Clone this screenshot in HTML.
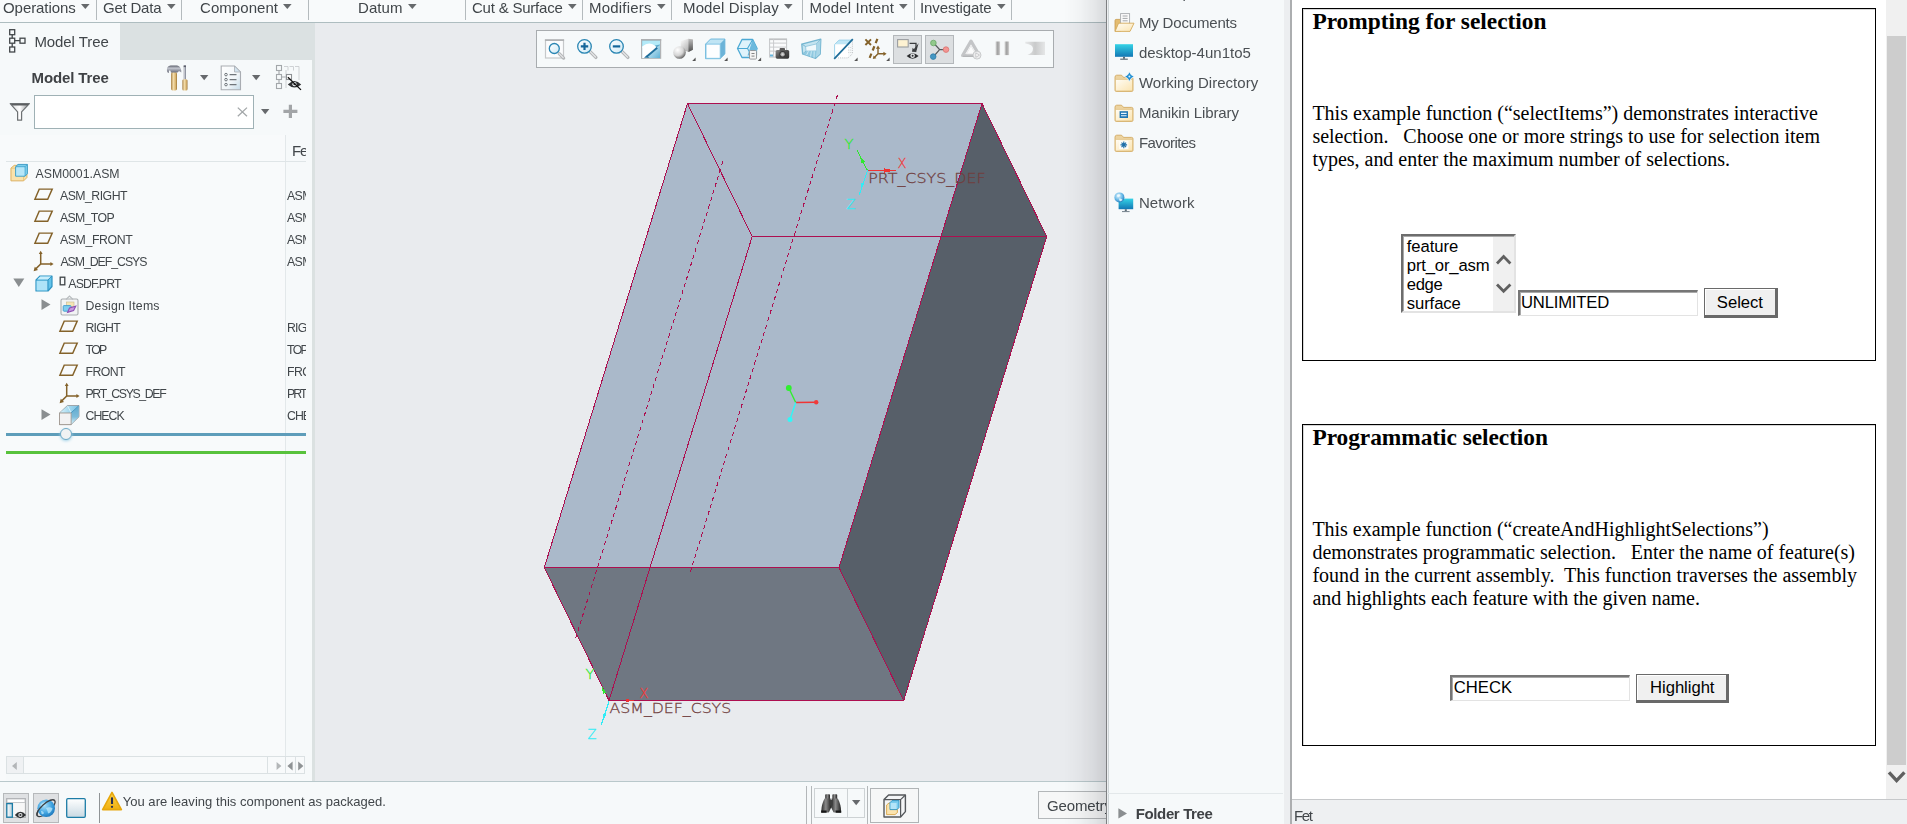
<!DOCTYPE html>
<html>
<head>
<meta charset="utf-8">
<title>Creo Parametric</title>
<style>
html,body{margin:0;padding:0;}
body{width:1907px;height:824px;overflow:hidden;position:relative;background:#e9ebee;font-family:"Liberation Sans",sans-serif;font-size:15px;color:#41464a;}
.abs{position:absolute;}
#menubar,#tab,#leftpanel,.tree,#statusbar,#navpanel,#bstatus{will-change:transform;}
svg{overflow:visible;}
#menubar{left:0;top:0;width:1107px;height:22px;background:#f8fafb;border-bottom:1px solid #aebdc0;}
#menubar .sep{position:absolute;top:0;width:1px;height:20px;background:#b4babd;}
#tabstrip{left:0;top:23px;width:315px;height:37px;background:#dbe1e2;}
#edge{left:312px;top:60px;width:3px;height:721px;background:#dbe1e1;}
#tab{left:0;top:23px;width:120px;height:37px;background:#f6f9fa;}
#leftpanel{left:0;top:60px;width:312px;height:721px;background:#f6f9fa;}
#statusbar{left:0;top:781px;width:1107px;height:43px;background:#f6f9fa;box-shadow:inset 0 1px 0 #b9c8cb;}
#gfx{left:315px;top:23px;width:792px;height:758px;background:#e9ebee;overflow:hidden;}
#navpanel{left:1106px;top:0;width:177px;height:824px;background:#f6f9fa;border-left:1px solid #7e8082;overflow:hidden;}
#splitter{left:1284px;top:0;width:6px;height:824px;background:#eceef0;border-right:2px solid #acaeb0;}
#browser{left:1292px;top:0;width:615px;height:799px;background:#ffffff;overflow:hidden;}
#bstatus{left:1292px;top:799px;width:615px;height:25px;background:#eef0f2;border-top:1px solid #c6c8ca;}
.tree{position:absolute;left:6px;top:135px;width:300px;height:621px;background:#f8fafb;overflow:hidden;}
.tree .col2{position:absolute;left:279px;top:0;width:21px;height:623px;background:#f6f9fa;border-left:1px solid #e3e8ea;}
.row{position:absolute;left:0;width:279px;height:22px;}
.row svg{position:absolute;}
.c2{position:absolute;left:281px;width:19px;overflow:hidden;height:22px;}
#browser .box{position:absolute;left:10px;width:574px;box-sizing:border-box;border:1px solid #000;box-shadow:inset 1px 1px 0 rgba(0,0,0,0.16);}
#browser .h{position:absolute;left:20.4px;font-family:"Liberation Serif",serif;font-weight:bold;font-size:23.4px;line-height:28px;color:#000;white-space:nowrap;}
#browser .p{position:absolute;left:20.4px;font-family:"Liberation Serif",serif;font-size:20px;line-height:23px;color:#000;white-space:nowrap;}
#browser .inp{position:absolute;box-sizing:border-box;background:#fff;border-style:solid;border-width:2px 1px 1px 2px;border-color:#767676 #e3e3e3 #e3e3e3 #767676;box-shadow:inset 1px 1px 0 #a9a9a9;}
#browser .btn{position:absolute;box-sizing:border-box;background:#f0f0f0;border-style:solid;border-width:1px 3px 3px 1px;border-color:#6a6a6a #696969 #696969 #6a6a6a;box-shadow:inset 1px 1px 0 #ffffff;}
#browser .ft{position:absolute;font-size:16.67px;line-height:19px;color:#000;white-space:nowrap;}
</style>
</head>
<body>

<!-- p_menu -->
<div id="menubar" class="abs"><span style="letter-spacing:-0.064px;position:absolute;left:3px;top:-2.0px;line-height:20px;font-size:15px;color:#41464a;white-space:nowrap;">Operations</span><svg class="abs" width="8.6" height="5" viewBox="0 0 8.6 5" style="left:80.8px;top:3.8px"><path d="M0 0 H8.6 L4.3 5 Z" fill="#66696c"/></svg><span style="letter-spacing:-0.219px;position:absolute;left:103px;top:-2.0px;line-height:20px;font-size:15px;color:#41464a;white-space:nowrap;">Get Data</span><svg class="abs" width="8.6" height="5" viewBox="0 0 8.6 5" style="left:166.8px;top:3.8px"><path d="M0 0 H8.6 L4.3 5 Z" fill="#66696c"/></svg><span style="letter-spacing:0.055px;position:absolute;left:200px;top:-2.0px;line-height:20px;font-size:15px;color:#41464a;white-space:nowrap;">Component</span><svg class="abs" width="8.6" height="5" viewBox="0 0 8.6 5" style="left:282.8px;top:3.8px"><path d="M0 0 H8.6 L4.3 5 Z" fill="#66696c"/></svg><span style="letter-spacing:0.078px;position:absolute;left:358px;top:-2.0px;line-height:20px;font-size:15px;color:#41464a;white-space:nowrap;">Datum</span><svg class="abs" width="8.6" height="5" viewBox="0 0 8.6 5" style="left:407.8px;top:3.8px"><path d="M0 0 H8.6 L4.3 5 Z" fill="#66696c"/></svg><span style="letter-spacing:-0.216px;position:absolute;left:472px;top:-2.0px;line-height:20px;font-size:15px;color:#41464a;white-space:nowrap;">Cut &amp; Surface</span><svg class="abs" width="8.6" height="5" viewBox="0 0 8.6 5" style="left:567.8px;top:3.8px"><path d="M0 0 H8.6 L4.3 5 Z" fill="#66696c"/></svg><span style="letter-spacing:0.193px;position:absolute;left:589px;top:-2.0px;line-height:20px;font-size:15px;color:#41464a;white-space:nowrap;">Modifiers</span><svg class="abs" width="8.6" height="5" viewBox="0 0 8.6 5" style="left:656.8px;top:3.8px"><path d="M0 0 H8.6 L4.3 5 Z" fill="#66696c"/></svg><span style="letter-spacing:0.132px;position:absolute;left:683px;top:-2.0px;line-height:20px;font-size:15px;color:#41464a;white-space:nowrap;">Model Display</span><svg class="abs" width="8.6" height="5" viewBox="0 0 8.6 5" style="left:783.8px;top:3.8px"><path d="M0 0 H8.6 L4.3 5 Z" fill="#66696c"/></svg><span style="letter-spacing:0.167px;position:absolute;left:809.6px;top:-2.0px;line-height:20px;font-size:15px;color:#41464a;white-space:nowrap;">Model Intent</span><svg class="abs" width="8.6" height="5" viewBox="0 0 8.6 5" style="left:898.8px;top:3.8px"><path d="M0 0 H8.6 L4.3 5 Z" fill="#66696c"/></svg><span style="letter-spacing:-0.085px;position:absolute;left:920px;top:-2.0px;line-height:20px;font-size:15px;color:#41464a;white-space:nowrap;">Investigate</span><svg class="abs" width="8.6" height="5" viewBox="0 0 8.6 5" style="left:996.8px;top:3.8px"><path d="M0 0 H8.6 L4.3 5 Z" fill="#66696c"/></svg><i class="sep" style="left:96px"></i><i class="sep" style="left:181px"></i><i class="sep" style="left:308px"></i><i class="sep" style="left:465px"></i><i class="sep" style="left:582px"></i><i class="sep" style="left:671px"></i><i class="sep" style="left:802px"></i><i class="sep" style="left:914px"></i><i class="sep" style="left:1011px"></i></div>
<!-- p_left -->
<div id="tabstrip" class="abs"></div><div id="edge" class="abs"></div><div id="tab" class="abs"><svg class="abs" width="20" height="26" viewBox="0 0 20 26" style="left:8px;top:5px"><g fill="none" stroke="#42474a" stroke-width="1.3"><rect x="1.7" y="1.7" width="5" height="5"/><rect x="1.7" y="10.2" width="5" height="5"/><rect x="1.7" y="19" width="5" height="5"/><rect x="12" y="10.2" width="5" height="5"/><path d="M4.2 6.7 V10.2 M4.2 15.2 V19 M6.7 12.7 H12"/></g></svg><span style="letter-spacing:-0.072px;position:absolute;left:34.4px;top:9.0px;line-height:20px;font-size:15px;color:#41464a;white-space:nowrap;">Model Tree</span></div><div id="leftpanel" class="abs"><span style="letter-spacing:-0.129px;position:absolute;left:31.6px;top:8.0px;line-height:20px;font-size:15px;color:#3f4245;white-space:nowrap;font-weight:bold;">Model Tree</span>
<svg class="abs" width="24" height="28" viewBox="0 0 24 28" style="left:166px;top:3.5px">
<defs><linearGradient id="wd" x1="0" x2="1"><stop offset="0" stop-color="#a9844a"/><stop offset="0.4" stop-color="#f3dcaa"/><stop offset="0.75" stop-color="#d9b673"/><stop offset="1" stop-color="#9c7436"/></linearGradient>
<linearGradient id="st" x1="0" x2="0" y1="0" y2="1"><stop offset="0" stop-color="#5d606c"/><stop offset="0.35" stop-color="#c3c6cf"/><stop offset="1" stop-color="#5f6270"/></linearGradient></defs>
<rect x="5" y="8" width="6" height="18.4" rx="1.7" fill="url(#wd)"/>
<path d="M0.9 6.4 Q0.6 2 4.6 1.6 H11 Q14.6 1.9 15.3 6.8 L15.2 8.6 Q13.4 6 11.4 8.6 H5 Q4.6 6.2 3.6 6.2 Q2.6 6.6 2.8 9 Q1 8.8 0.9 6.4 Z" fill="url(#st)"/>
<rect x="17.7" y="1.5" width="2.3" height="14" fill="#8a8e9b"/><rect x="18.3" y="2.4" width="0.8" height="13" fill="#d9dbe2"/><rect x="17.7" y="1.5" width="2.3" height="1.6" fill="#5d606c"/>
<rect x="16.3" y="15.2" width="5.2" height="11.2" rx="1.5" fill="url(#wd)"/></svg><svg class="abs" width="8.4" height="5.2" viewBox="0 0 8.4 5.2" style="left:200px;top:15px"><path d="M0 0 H8.4 L4.2 5.2 Z" fill="#66696c"/></svg><svg class="abs" width="22" height="26" viewBox="0 0 22 26" style="left:219.5px;top:4.5px">
<defs><linearGradient id="dg" x1="0" x2="1" y1="0" y2="1"><stop offset="0" stop-color="#ffffff"/><stop offset="0.6" stop-color="#f1f6f9"/><stop offset="1" stop-color="#c5dbe8"/></linearGradient></defs>
<path d="M1.2 1 H14.5 L20.5 7 V24.8 H1.2 Z" fill="url(#dg)" stroke="#a9adb2" stroke-width="1.1"/><path d="M14.5 1 V7 H20.5 Z" fill="#d3e3ee" stroke="#a9adb2" stroke-width="0.8"/>
<g fill="none" stroke="#70767b" stroke-width="1"><circle cx="6" cy="9.6" r="1.3"/><circle cx="6" cy="14.6" r="1.3"/><circle cx="6" cy="19.6" r="1.3"/><path d="M9.6 9.6 H16.5 M9.6 14.6 H16.5 M9.6 19.6 H16.5" stroke-width="1.2"/></g></svg><svg class="abs" width="8.4" height="5.2" viewBox="0 0 8.4 5.2" style="left:252px;top:15px"><path d="M0 0 H8.4 L4.2 5.2 Z" fill="#66696c"/></svg><svg class="abs" width="28" height="27" viewBox="0 0 28 27" style="left:275px;top:4px">
<g fill="none" stroke="#a3a7aa" stroke-width="1.1"><rect x="1.5" y="1.5" width="5" height="5"/><rect x="1.5" y="10.5" width="5" height="5"/><rect x="1.5" y="19.5" width="5" height="5"/><path d="M4 6.5 V10.5 M4 15.5 V19.5 M6.5 13 H11.5"/></g>
<g fill="none" stroke="#c9cccf" stroke-width="0.9"><path d="M9 2.5 H13 V6.5 M14.5 2.5 H18.5 V6.5 M20 2.5 H24 V16 M11 6 V24"/></g>
<rect x="11.5" y="10.5" width="5" height="5" fill="#fff" stroke="#8d9194" stroke-width="1.1"/>
<path d="M12.8 20.4 Q19.5 13.4 26.2 20.4 Q19.5 26.6 12.8 20.4 Z" fill="#303234"/><circle cx="19.5" cy="20.2" r="2.1" fill="#f4f8fa"/><circle cx="19.5" cy="20.2" r="1.15" fill="#303234"/>
<path d="M12.9 13.2 L26 25.9" stroke="#111" stroke-width="1.3"/></svg>
<svg class="abs" width="22" height="20" viewBox="0 0 22 20" style="left:9px;top:42px">
<defs><linearGradient id="fg" x1="0" x2="1"><stop offset="0" stop-color="#d8dadb"/><stop offset="0.5" stop-color="#ffffff"/><stop offset="1" stop-color="#8d9092"/></linearGradient></defs>
<path d="M1.2 1.6 H20.4 L12.6 9.8 V18.2 H8.6 V9.8 Z" fill="url(#fg)" stroke="#6d7173" stroke-width="1.2" stroke-linejoin="round"/><path d="M2 2 H19.6 L18.4 3.4 H3.4 Z" fill="#5b5e60"/></svg>
<div class="abs" style="left:34px;top:35px;width:218px;height:32px;background:#fff;border:1px solid #9fb1b5"></div>
<svg class="abs" width="11" height="10" viewBox="0 0 11 10" style="left:236.5px;top:46.5px"><path d="M0.8 0.6 L10 9.2 M10 0.6 L0.8 9.2" stroke="#a3a7a9" stroke-width="1.3" fill="none"/></svg>
<svg class="abs" width="8.4" height="5.2" viewBox="0 0 8.4 5.2" style="left:261px;top:49px"><path d="M0 0 H8.4 L4.2 5.2 Z" fill="#66696c"/></svg>
<svg class="abs" width="15" height="15" viewBox="0 0 15 15" style="left:283px;top:44px"><path d="M7.4 0.8 V14 M0.4 7.4 H14.4" stroke="#a2a5a7" stroke-width="3.2" fill="none"/></svg>
</div>
<div class="abs" style="left:0;top:135px;width:6px;height:646px;background:#f8fafb"></div><div class="tree">
<div class="col2"></div><div class="abs" style="left:0;top:2px;width:300px;height:619px">
<div class="abs" style="left:0;top:24px;width:300px;height:1px;background:#dfe5e7"></div>
<div class="c2" style="top:2px;left:286px;width:14px"><span style="letter-spacing:-1.116px;position:absolute;left:0px;top:2.0px;line-height:20px;font-size:15px;color:#41464a;white-space:nowrap;">Fe</span></div>
<div class="row" style="top:25px"><svg width="18.8" height="18.8" viewBox="0 0 20 20" style="left:4px;top:1.4px"><path d="M1 5.5 L4.5 2.5 H18 V15.5 L14.5 19 H1 Z" fill="#f9e2ac" stroke="#dcae5a" stroke-width="1"/><path d="M1 5.5 H14.5 V19 M14.5 5.5 L18 2.5" fill="none" stroke="#e6bd6e" stroke-width="0.8"/><path d="M6 4 L8.5 1.5 H18.5 V11.5 L16 14 H6 Z" fill="#7fd0ee" stroke="#3b9cc6" stroke-width="1"/><path d="M6 4 H16 V14 M16 4 L18.5 1.5" fill="none" stroke="#3b9cc6" stroke-width="0.8"/><path d="M6.6 4.6 H15.4 V13.4 H6.6 Z" fill="#b6e6f8"/></svg><span style="letter-spacing:0.002px;position:absolute;left:29.5px;top:2.0px;line-height:20px;font-size:12.3px;color:#41464a;white-space:nowrap;">ASM0001.ASM</span></div><div class="row" style="top:47px"><svg width="20" height="13" viewBox="0 0 20 13" style="left:27.5px;top:3.9px"><path d="M5.2 1.1 H18.2 L13.7 11.3 H0.9 Z" fill="none" stroke="#84622a" stroke-width="1.45" stroke-linejoin="miter"/></svg><span style="letter-spacing:-0.531px;position:absolute;left:54px;top:2.0px;line-height:20px;font-size:12.3px;color:#41464a;white-space:nowrap;">ASM_RIGHT</span></div><div class="row" style="top:69px"><svg width="20" height="13" viewBox="0 0 20 13" style="left:27.5px;top:3.9px"><path d="M5.2 1.1 H18.2 L13.7 11.3 H0.9 Z" fill="none" stroke="#84622a" stroke-width="1.45" stroke-linejoin="miter"/></svg><span style="letter-spacing:-0.658px;position:absolute;left:54px;top:2.0px;line-height:20px;font-size:12.3px;color:#41464a;white-space:nowrap;">ASM_TOP</span></div><div class="row" style="top:91px"><svg width="20" height="13" viewBox="0 0 20 13" style="left:27.5px;top:3.9px"><path d="M5.2 1.1 H18.2 L13.7 11.3 H0.9 Z" fill="none" stroke="#84622a" stroke-width="1.45" stroke-linejoin="miter"/></svg><span style="letter-spacing:-0.393px;position:absolute;left:54px;top:2.0px;line-height:20px;font-size:12.3px;color:#41464a;white-space:nowrap;">ASM_FRONT</span></div><div class="row" style="top:113px"><svg width="22" height="22" viewBox="0 0 22 22" style="left:27px;top:0px"><g stroke="#84622a" stroke-width="1.5" fill="#84622a"><path d="M7.7 3 V14 H19" fill="none"/><path d="M7.7 14 L2 19.6" fill="none"/><path d="M7.7 0.8 L9.6 4 H5.8 Z M20.6 14 L17.4 15.9 V12.1 Z M0.6 21.2 L1.8 16.8 L5 20 Z" stroke="none"/></g></svg><span style="letter-spacing:-1.028px;position:absolute;left:54.4px;top:2.0px;line-height:20px;font-size:12.3px;color:#41464a;white-space:nowrap;">ASM_DEF_CSYS</span></div><div class="row" style="top:135px"><svg width="12" height="10" viewBox="0 0 12 10" style="left:7px;top:6px"><path d="M0.3 0.5 H11.3 L5.8 9 Z" fill="#8a8e90"/></svg><svg width="18" height="17" viewBox="0 0 18 17" style="left:28.5px;top:2.5px"><path d="M1 5 L5 1 H17 V11.5 L13 16 H1 Z" fill="#63c3ea" stroke="#2f93c2" stroke-width="1.2" stroke-linejoin="round"/><path d="M1.6 5.4 H12.6 V15.4 H1.6 Z" fill="#aee3f8"/><path d="M1 5 H13 V16 M13 5 L17 1" fill="none" stroke="#2f93c2" stroke-width="1"/><path d="M5.2 1.6 H16 L12.8 4.6 H2.2 Z" fill="#c9eefb"/></svg><svg width="8" height="11" viewBox="0 0 8 11" style="left:53px;top:4px"><rect x="1.2" y="1.2" width="4.6" height="7.6" fill="none" stroke="#3f4447" stroke-width="1.3"/></svg><span style="letter-spacing:-0.862px;position:absolute;left:62.3px;top:2.0px;line-height:20px;font-size:12.3px;color:#41464a;white-space:nowrap;">ASDF.PRT</span></div><div class="row" style="top:157px"><svg width="10" height="12" viewBox="0 0 10 12" style="left:34.5px;top:5px"><path d="M0.5 0.3 V10.9 L9.5 5.6 Z" fill="#8a8e90"/></svg><svg width="19" height="21" viewBox="0 0 19 21" style="left:54px;top:0.5px"><rect x="1" y="4" width="17" height="16" rx="1.5" fill="#f2f3f4" stroke="#a9adb0" stroke-width="1.1"/><path d="M6 4.5 L9.5 1 L13 4.5" fill="none" stroke="#b9bdc0" stroke-width="1.2"/><rect x="6.5" y="7" width="7.5" height="4.5" fill="#f6e5b4" stroke="#c6b98e" stroke-width="0.6"/><rect x="3.2" y="10.6" width="7.8" height="5.6" rx="0.8" fill="#7fcdf0" stroke="#3f9ccb" stroke-width="0.9"/><path d="M9.5 13 L15.8 11.2 L13.6 15.6 L7.6 17.4 Z" fill="#c79be0" stroke="#8d4fb4" stroke-width="1.1"/></svg><span style="letter-spacing:0.203px;position:absolute;left:79.5px;top:2.0px;line-height:20px;font-size:12.3px;color:#41464a;white-space:nowrap;">Design Items</span></div><div class="row" style="top:179px"><svg width="20" height="13" viewBox="0 0 20 13" style="left:53px;top:3.9px"><path d="M5.2 1.1 H18.2 L13.7 11.3 H0.9 Z" fill="none" stroke="#84622a" stroke-width="1.45" stroke-linejoin="miter"/></svg><span style="letter-spacing:-0.766px;position:absolute;left:79.5px;top:2.0px;line-height:20px;font-size:12.3px;color:#41464a;white-space:nowrap;">RIGHT</span></div><div class="row" style="top:201px"><svg width="20" height="13" viewBox="0 0 20 13" style="left:53px;top:3.9px"><path d="M5.2 1.1 H18.2 L13.7 11.3 H0.9 Z" fill="none" stroke="#84622a" stroke-width="1.45" stroke-linejoin="miter"/></svg><span style="letter-spacing:-1.631px;position:absolute;left:79.5px;top:2.0px;line-height:20px;font-size:12.3px;color:#41464a;white-space:nowrap;">TOP</span></div><div class="row" style="top:223px"><svg width="20" height="13" viewBox="0 0 20 13" style="left:53px;top:3.9px"><path d="M5.2 1.1 H18.2 L13.7 11.3 H0.9 Z" fill="none" stroke="#84622a" stroke-width="1.45" stroke-linejoin="miter"/></svg><span style="letter-spacing:-0.590px;position:absolute;left:79.5px;top:2.0px;line-height:20px;font-size:12.3px;color:#41464a;white-space:nowrap;">FRONT</span></div><div class="row" style="top:245px"><svg width="22" height="22" viewBox="0 0 22 22" style="left:52.5px;top:0px"><g stroke="#84622a" stroke-width="1.5" fill="#84622a"><path d="M7.7 3 V14 H19" fill="none"/><path d="M7.7 14 L2 19.6" fill="none"/><path d="M7.7 0.8 L9.6 4 H5.8 Z M20.6 14 L17.4 15.9 V12.1 Z M0.6 21.2 L1.8 16.8 L5 20 Z" stroke="none"/></g></svg><span style="letter-spacing:-1.358px;position:absolute;left:79.5px;top:2.0px;line-height:20px;font-size:12.3px;color:#41464a;white-space:nowrap;">PRT_CSYS_DEF</span></div><div class="row" style="top:267px"><svg width="10" height="12" viewBox="0 0 10 12" style="left:34.5px;top:5px"><path d="M0.5 0.3 V10.9 L9.5 5.6 Z" fill="#8a8e90"/></svg><svg width="21" height="21" viewBox="0 0 21 21" style="left:52.6px;top:1.2px"><defs><linearGradient id="ftp" x1="0" x2="1"><stop offset="0" stop-color="#d6f1fb"/><stop offset="0.55" stop-color="#9fd6ee"/><stop offset="1" stop-color="#7cc0e0"/></linearGradient><linearGradient id="frt" x1="0" x2="0" y1="0" y2="1"><stop offset="0" stop-color="#5fa9cd"/><stop offset="0.6" stop-color="#7dbcda"/><stop offset="1" stop-color="#dff4fb"/></linearGradient></defs><path d="M0.5 8 L8.4 0.5 H20 V11.8 L12 19.6 H0.5 Z" fill="#8ecbe6" stroke="#9a9ea2" stroke-width="0.9" stroke-linejoin="round"/><path d="M0.9 7.8 L8.5 0.9 H19.4 L12 7.8 Z" fill="url(#ftp)"/><path d="M12.2 8 L19.6 1.2 V11.6 L12.2 19 Z" fill="url(#frt)"/><path d="M8.6 1 L12 7.6" stroke="#e6f7fd" stroke-width="0.8"/><path d="M12 8 L19.8 0.7" stroke="#3f93bd" stroke-width="0.9"/><rect x="0.5" y="8" width="11.6" height="11.6" fill="#f2f2f3" stroke="#a39a92" stroke-width="0.9"/></svg><span style="letter-spacing:-0.987px;position:absolute;left:79.5px;top:2.0px;line-height:20px;font-size:12.3px;color:#41464a;white-space:nowrap;">CHECK</span></div><div class="c2" style="top:47px"><span style="letter-spacing:-0.628px;position:absolute;left:0px;top:2.0px;line-height:20px;font-size:12.3px;color:#41464a;white-space:nowrap;">ASM</span></div><div class="c2" style="top:69px"><span style="letter-spacing:-0.628px;position:absolute;left:0px;top:2.0px;line-height:20px;font-size:12.3px;color:#41464a;white-space:nowrap;">ASM</span></div><div class="c2" style="top:91px"><span style="letter-spacing:-0.628px;position:absolute;left:0px;top:2.0px;line-height:20px;font-size:12.3px;color:#41464a;white-space:nowrap;">ASM</span></div><div class="c2" style="top:113px"><span style="letter-spacing:-0.628px;position:absolute;left:0px;top:2.0px;line-height:20px;font-size:12.3px;color:#41464a;white-space:nowrap;">ASM</span></div><div class="c2" style="top:179px"><span style="letter-spacing:-0.766px;position:absolute;left:0px;top:2.0px;line-height:20px;font-size:12.3px;color:#41464a;white-space:nowrap;">RIGHT</span></div><div class="c2" style="top:201px"><span style="letter-spacing:-1.631px;position:absolute;left:0px;top:2.0px;line-height:20px;font-size:12.3px;color:#41464a;white-space:nowrap;">TOP</span></div><div class="c2" style="top:223px"><span style="letter-spacing:-0.590px;position:absolute;left:0px;top:2.0px;line-height:20px;font-size:12.3px;color:#41464a;white-space:nowrap;">FRONT</span></div><div class="c2" style="top:245px"><span style="letter-spacing:-1.938px;position:absolute;left:0px;top:2.0px;line-height:20px;font-size:12.3px;color:#41464a;white-space:nowrap;">PRT</span></div><div class="c2" style="top:267px"><span style="letter-spacing:-0.987px;position:absolute;left:0px;top:2.0px;line-height:20px;font-size:12.3px;color:#41464a;white-space:nowrap;">CHECK</span></div>
<div class="abs" style="left:0;top:296px;width:300px;height:3px;background:#5e9dba"></div>
<div class="abs" style="left:53.5px;top:291px;width:10px;height:10px;border-radius:7px;background:#f1f2f3;border:1.5px solid #6ea9c6;box-shadow:0 1px 3px #9fd0e6"></div>
<div class="abs" style="left:0;top:314px;width:300px;height:3px;background:#58c23c"></div>
</div></div>
<!-- p_gfx -->
<div id="gfx" class="abs"><svg class="abs" style="left:0;top:0" width="792" height="758" viewBox="0 0 792 758"><g shape-rendering="crispEdges"><polygon points="372.5,80.5 667.0,80.5 524.0,544.5 229.3,544.5" fill="#aab9ca"/><polygon points="667.0,80.5 731.7,213.5 588.7,677.5 524.0,544.5" fill="#575f69"/><polygon points="229.3,544.5 524.0,544.5 588.7,677.5 294.0,677.5" fill="#6f7782"/><g stroke="#ad0f50" stroke-width="1" fill="none"><line x1="372.5" y1="80.5" x2="667.0" y2="80.5" /><line x1="667.0" y1="80.5" x2="731.7" y2="213.5" /><line x1="731.7" y1="213.5" x2="437.2" y2="213.5" /><line x1="437.2" y1="213.5" x2="372.5" y2="80.5" /><line x1="372.5" y1="80.5" x2="229.3" y2="544.5" /><line x1="437.2" y1="213.5" x2="294.0" y2="677.5" /><line x1="229.3" y1="544.5" x2="294.0" y2="677.5" /><line x1="229.3" y1="544.5" x2="524.0" y2="544.5" /><line x1="524.0" y1="544.5" x2="588.7" y2="677.5" /><line x1="294.0" y1="677.5" x2="588.7" y2="677.5" /><line x1="731.7" y1="213.5" x2="588.7" y2="677.5" /><line x1="667.0" y1="80.5" x2="524.0" y2="544.5" /><line x1="522.4" y1="72.3" x2="374.2" y2="552.7" stroke-dasharray="4.2 3.3"/><line x1="407.8" y1="138.5" x2="259.6" y2="618.7" stroke-dasharray="4.2 3.3"/></g><g stroke-width="1" fill="none"><line x1="552.5" y1="147.5" x2="542.0" y2="127.2" stroke="#2fe82f"/><line x1="552.5" y1="147.5" x2="581.0" y2="147.5" stroke="#f03232"/><line x1="552.5" y1="147.5" x2="544.3" y2="171.7" stroke="#30ecf6"/></g><polygon points="544.2,131.5 549.6,138.6 546.6,140.2" fill="#2fe82f"/><polygon points="580.0,147.5 569.0,145.3 569.0,149.7" fill="#f03232"/><polygon points="545.6,167.5 546.6,159.6 549.6,160.6" fill="#30ecf6"/><g stroke-width="1" fill="none"><line x1="294.0" y1="678.5" x2="286.3" y2="701.7" stroke="#30ecf6"/></g><polygon points="286.5,662.5 291.0,669.5 288.0,671.0" fill="#2fe82f"/><polygon points="319.0,677.5 311.0,676.0 311.0,679.2" fill="#f03232"/><polygon points="287.5,698.5 288.3,690.5 291.3,691.5" fill="#30ecf6"/></g><g stroke-width="1.4" fill="none"><line x1="480.7" y1="379.5" x2="473.8" y2="365.0" stroke="#2ff02f"/><line x1="480.7" y1="379.5" x2="501.2" y2="379.3" stroke="#f03434"/><line x1="480.7" y1="379.5" x2="475.0" y2="396.5" stroke="#30f6f6"/></g><circle cx="473.79999999999995" cy="365" r="2.9" fill="#2ff02f"/><circle cx="501.20000000000005" cy="379.2" r="2.2" fill="#f03a3a"/><circle cx="475" cy="396.6" r="2.5" fill="#30f8f8"/><text x="529.6" y="125.8" font-family="DejaVu Sans Light, DejaVu Sans, Liberation Sans, sans-serif" font-weight="200" font-size="14.6" fill="#2fe82f" stroke="#2fe82f" stroke-width="0.3" textLength="9" lengthAdjust="spacingAndGlyphs">Y</text><text x="582.6" y="145.2" font-family="DejaVu Sans Light, DejaVu Sans, Liberation Sans, sans-serif" font-weight="200" font-size="14.6" fill="#f03a3a" stroke="#f03a3a" stroke-width="0.3" textLength="9" lengthAdjust="spacingAndGlyphs">X</text><text x="531.6" y="186.0" font-family="DejaVu Sans Light, DejaVu Sans, Liberation Sans, sans-serif" font-weight="200" font-size="14.6" fill="#30ecf6" stroke="#30ecf6" stroke-width="0.3" textLength="9" lengthAdjust="spacingAndGlyphs">Z</text><text x="270.6" y="656.2" font-family="DejaVu Sans Light, DejaVu Sans, Liberation Sans, sans-serif" font-weight="200" font-size="14.6" fill="#2fe82f" stroke="#2fe82f" stroke-width="0.3" textLength="9" lengthAdjust="spacingAndGlyphs">Y</text><text x="324.6" y="675.2" font-family="DejaVu Sans Light, DejaVu Sans, Liberation Sans, sans-serif" font-weight="200" font-size="14.6" fill="#f03a3a" stroke="#f03a3a" stroke-width="0.3" textLength="9" lengthAdjust="spacingAndGlyphs">X</text><text x="272.4" y="716.2" font-family="DejaVu Sans Light, DejaVu Sans, Liberation Sans, sans-serif" font-weight="200" font-size="14.6" fill="#30ecf6" stroke="#30ecf6" stroke-width="0.3" textLength="9" lengthAdjust="spacingAndGlyphs">Z</text><text x="553.3" y="160.0" font-family="DejaVu Sans Light, DejaVu Sans, Liberation Sans, sans-serif" font-weight="200" font-size="14.6" fill="#703e3e" stroke="#703e3e" stroke-width="0.3" textLength="117.3" lengthAdjust="spacingAndGlyphs">PRT_CSYS_DEF</text><text x="294.6" y="690.0" font-family="DejaVu Sans Light, DejaVu Sans, Liberation Sans, sans-serif" font-weight="200" font-size="14.6" fill="#703e3e" stroke="#703e3e" stroke-width="0.3" textLength="121.6" lengthAdjust="spacingAndGlyphs">ASM_DEF_CSYS</text></svg><div class="abs" style="left:221px;top:7px;width:518px;height:38px;background:#f6f9fa;border:1px solid #a8acaf;box-sizing:border-box;border-width:1px 1px 1px 1px"></div><div class="abs" style="left:578px;top:12px;width:29px;height:29px;background:#dcdfe1;border:1px solid #b4b8bb;box-sizing:border-box"></div><div class="abs" style="left:610px;top:12px;width:29px;height:29px;background:#dcdfe1;border:1px solid #b4b8bb;box-sizing:border-box"></div><svg class="abs" style="left:0;top:0" width="792" height="80" viewBox="0 0 792 80"><defs>
<linearGradient id="bl" x1="0" x2="1" y1="0" y2="1"><stop offset="0" stop-color="#e9f7fd"/><stop offset="1" stop-color="#5fb2d6"/></linearGradient>
<linearGradient id="lens" x1="0" x2="1" y1="0" y2="1"><stop offset="0" stop-color="#ffffff"/><stop offset="1" stop-color="#cfeaf6"/></linearGradient>
<radialGradient id="sph" cx="0.35" cy="0.3" r="0.8"><stop offset="0" stop-color="#ffffff"/><stop offset="0.55" stop-color="#d4d4d4"/><stop offset="1" stop-color="#4a4a4a"/></radialGradient>
<linearGradient id="gr" x1="0" x2="1"><stop offset="0" stop-color="#d9d9d9"/><stop offset="0.5" stop-color="#9c9c9c"/><stop offset="1" stop-color="#d4d4d4"/></linearGradient>
<linearGradient id="bxf" x1="0" x2="1" y1="0" y2="1"><stop offset="0" stop-color="#ffffff"/><stop offset="1" stop-color="#9a9a9a"/></linearGradient>
<linearGradient id="bxs" x1="0" x2="0" y1="0" y2="1"><stop offset="0" stop-color="#b9b9b9"/><stop offset="1" stop-color="#3f3f3f"/></linearGradient>
<linearGradient id="cam" x1="0" x2="1" y1="0" y2="1"><stop offset="0" stop-color="#8d8d8d"/><stop offset="0.5" stop-color="#4d4d4d"/><stop offset="1" stop-color="#2f2f2f"/></linearGradient>
</defs><g transform="translate(229.79999999999995,16.299999999999997)"><rect x="0.7" y="0.7" width="18" height="18" fill="#fbfcfd" stroke="#c6c8ca" stroke-width="1.2"/><rect x="0.1" y="0" width="19.2" height="1.7" fill="#b1b3b5"/><path d="M14.4 14.4 L18.8 18.8" stroke="#b3b5b7" stroke-width="3.3" stroke-linecap="round"/><path d="M14.4 14.4 L18.4 18.4" stroke="#e7e8e9" stroke-width="1.2" stroke-linecap="round"/><circle cx="9.5" cy="9.2" r="5" fill="url(#lens)" stroke="#2a86b3" stroke-width="1.3"/></g><g transform="translate(261.5,15)"><path d="M13.6 13.6 L19.4 19.4" stroke="#b3b5b7" stroke-width="3.3" stroke-linecap="round"/><path d="M13.4 13.4 L19 19" stroke="#e7e8e9" stroke-width="1.2" stroke-linecap="round"/><circle cx="8" cy="8.4" r="6.8" fill="url(#lens)" stroke="#2a86b3" stroke-width="1.3"/><path d="M8 4.7 V12.1 M4.3 8.4 H11.7" stroke="#14669a" stroke-width="2.2"/></g><g transform="translate(293.5,15)"><path d="M13.6 13.6 L19.4 19.4" stroke="#b3b5b7" stroke-width="3.3" stroke-linecap="round"/><path d="M13.4 13.4 L19 19" stroke="#e7e8e9" stroke-width="1.2" stroke-linecap="round"/><circle cx="8" cy="8.4" r="6.8" fill="url(#lens)" stroke="#2a86b3" stroke-width="1.3"/><path d="M4.3 8.4 H11.7" stroke="#14669a" stroke-width="2.2"/></g><g transform="translate(326,16)"><rect x="0.6" y="0.6" width="19" height="18.6" fill="#5fabcc" stroke="#b1b3b5" stroke-width="1.2"/><rect x="0" y="0" width="20.2" height="1.8" fill="#aeb0b2"/><path d="M1.2 1.8 H19 V5.4 L1.2 9 Z" fill="#b4eaf8"/><path d="M1.2 19 V7.4 Q6 3.6 11 5 Q14.6 6.2 15.6 8.4 L6.5 19 Z" fill="#ffffff"/><path d="M15.6 8.4 L19 6 V19 H6.5 Z" fill="url(#bl)"/><path d="M5.6 17.8 L16.2 8.8" stroke="#1f6f9c" stroke-width="1.9"/><path d="M3 18.8 H8.4 L5.4 16.4Z" fill="#1f6f9c"/></g><g transform="translate(358,15.5)"><path d="M7.7 2.4 L15.5 0.3 L19.9 1.1 V11.2 L15.5 13.4 L7.7 10.5 Z" fill="url(#bxf)"/><path d="M15.5 0.3 L19.9 1.1 V11.2 L15.5 13.4 Z" fill="url(#bxs)" opacity="0.85"/><circle cx="6.5" cy="14" r="6.3" fill="url(#sph)"/><path d="M22.6 19 V22.4 H19.2 Z" fill="#555"/></g><g transform="translate(390,15.5)"><path d="M0.6 5.6 L5.6 0.5 H19.9 V15.4 L15 20.2 H0.6 Z" fill="#74b9dc" stroke="#66b4da" stroke-width="0.9" stroke-linejoin="round"/><path d="M5.6 0.9 H19.3 L15 5.4 H1.2 Z" fill="#bfe4f4"/><path d="M15.4 5.6 L19.5 1.4 V15.2 L15.4 19.4 Z" fill="#6cb3d8"/><rect x="1" y="5.6" width="14.2" height="14.2" fill="#fdfeff" stroke="#7fc3e3" stroke-width="0.9"/><path d="M22.6 19 V22.4 H19.2 Z" fill="#555"/></g><g transform="translate(421.5,15.5)"><path d="M1 10 L5.5 1 H16.2 L20.6 10 L16.2 19 H5.5 Z" fill="#dff3fb" stroke="#4ca9d4" stroke-width="1.3" stroke-linejoin="round"/><path d="M16.2 1 L20.6 10 V17 H11 Z" fill="#6cb9dd"/><path d="M1 10 H11 L16.2 1 M11 10 L16.2 19" fill="none" stroke="#4ca9d4" stroke-width="1.1"/><rect x="13" y="12" width="7" height="8.6" rx="1" fill="#f4f4f4" stroke="#8e9295" stroke-width="0.9"/><path d="M15 15 H18 M15 17.6 H18" stroke="#777" stroke-width="0.9"/><path d="M24.6 19 V22.4 H21.2 Z" fill="#555"/></g><g transform="translate(454,15.5)"><rect x="0.6" y="0.6" width="17" height="18" fill="#fafbfc" stroke="#c4c6c8" stroke-width="1"/><rect x="0.2" y="0.1" width="17.8" height="1.5" fill="#c0c2c4"/><path d="M0.6 4.6 H17.6 M0.6 8.6 H17.6 M0.6 12.6 H17.6 M4.6 0.6 V18.6" stroke="#c9cbcd" stroke-width="1"/><path d="M1 16 H4 V18 H1Z" fill="#69b6dc"/><rect x="6.6" y="11.4" width="13.6" height="8.8" rx="1.6" fill="url(#cam)"/><rect x="10.6" y="9.6" width="5.4" height="2.8" rx="0.8" fill="#5a5a5a"/><circle cx="13.6" cy="15.8" r="3.3" fill="#3a3a3a"/><circle cx="13.6" cy="15.8" r="2.2" fill="#a9a9a9"/><circle cx="13.6" cy="15.8" r="1.1" fill="#d9d9d9"/></g><g transform="translate(486,15.5)"><path d="M0.8 5.6 L19.8 0.6 L19.2 15.6 L14.6 19.8 L1.6 15.4 Z" fill="#c4e4f0" stroke="#74b5d0" stroke-width="1.3" stroke-linejoin="round"/><path d="M4.6 8 L15.6 5.4 V12.4 L5 12.6 Z" fill="#f0f9fc" stroke="#8cc3da" stroke-width="0.8"/><path d="M0.8 5.6 L4.6 8 M19.8 0.6 L15.6 5.4 M14.6 19.8 L15.6 12.4 M1.6 15.4 L5 12.6" stroke="#74b5d0" stroke-width="0.9" fill="none"/><path d="M5 12.8 L15.4 12.6 L14.4 19.4 L2 15.4 Z" fill="#8fc8e0"/><path d="M7.4 12.8 L5.6 16.6 M10.4 12.8 L9.6 18 M13.2 12.8 L13 19" stroke="#cdeaf4" stroke-width="1"/><path d="M15.8 5.6 L19.5 1.2 L19 15.2 L15 19 Z" fill="#a9d6e8"/></g><g transform="translate(518,15.5)"><path d="M1.6 6 L6 1.6 H19.6 L15 6 Z" fill="#bfe6f6"/><path d="M1.6 6 H15 V19.4 H1.6 Z" fill="#ffffff"/><path d="M1.6 6 L6 1.6 H19.6 M1.6 6 V19.4" stroke="#9fd3ea" stroke-width="1"  fill="none"/><path d="M19.4 3 V15.4 L15 19.4 H4" stroke="#b9bcbf" stroke-width="0.9" stroke-dasharray="1 1.1" fill="none"/><path d="M15.2 9 H19 M15.2 11.6 H19 M15.2 14 H19" stroke="#c6c8ca" stroke-width="0.8" stroke-dasharray="1 1"/><path d="M1.2 20.4 L19.8 0.6" stroke="#1d6c98" stroke-width="1.7"/><path d="M24.6 19 V22.4 H21.2 Z" fill="#555"/></g><g transform="translate(550,15)"><g stroke="#84622a" fill="none"><path d="M0.4 1.4 L6 7 M6 1.4 L0.4 7" stroke-width="1.9"/><path d="M12.4 0.8 L4.2 21" stroke-width="2.2" stroke-dasharray="4.6 3.4"/><path d="M13 10 V15.8 H19 M13 15.8 L9.6 19.2" stroke-width="1.4"/></g><path d="M13 7.4 L15.1 10.8 H10.9 Z M21.6 15.8 L18.4 17.9 V13.7 Z M7.8 21 L8.6 17.4 L11.4 20.2 Z" fill="#84622a"/><path d="M24.6 19.6 V23 H21.2 Z" fill="#555"/></g><g transform="translate(582,16)"><rect x="0.6" y="0.6" width="10.6" height="7.4" fill="#fdf2d2" stroke="#9b9ea1" stroke-width="1.1"/><path d="M12.6 4.4 H19 V10.6" fill="none" stroke="#3a3c3e" stroke-width="1.3"/><path d="M15.6 8.8 L19.6 13 L15 12.8 Z M21.6 4.2 L19 13.4 L17 10Z" fill="#3a3c3e"/><path d="M9.6 17 Q15.6 11.6 21.6 17 Q15.6 22.4 9.6 17 Z" fill="#2c2e30"/><circle cx="15.6" cy="16.8" r="2.3" fill="#e3e5e7"/><circle cx="15.6" cy="16.8" r="1" fill="#2c2e30"/></g><g transform="translate(614,15)"><path d="M4.6 5 L10.6 11.6 L4.2 19 M10.6 11.6 H17" stroke="#55585b" stroke-width="1.2" fill="none"/><circle cx="4.4" cy="5" r="2.8" fill="#92c98c" stroke="#6aa868" stroke-width="0.8"/><circle cx="17" cy="11.6" r="2.8" fill="#f39592" stroke="#d97370" stroke-width="0.8"/><circle cx="4.2" cy="18.6" r="2.8" fill="#4396c2" stroke="#2f7ca8" stroke-width="0.8"/></g><g transform="translate(646,15.5)"><path d="M10 2.6 L18.4 17 H1.6 Z" fill="#fbfcfc" stroke="#c3c5c7" stroke-width="3.2" stroke-linejoin="round"/><path d="M10 7.4 L14.6 15.4 H5.4 Z" fill="none" stroke="#e4e5e6" stroke-width="0.8"/><path d="M2 17.8 H17" stroke="#b3b5b7" stroke-width="1.2"/><circle cx="16" cy="16.6" r="4" fill="#ededee" stroke="#bfc1c3" stroke-width="0.8"/><path d="M14.8 14.4 L18.4 16.6 L14.8 18.8 Z" fill="#fafafa" stroke="#b0b2b4" stroke-width="0.6"/></g><g transform="translate(680.5,18.5)"><rect x="0" y="0" width="4.6" height="13.6" fill="url(#gr)"/><rect x="9" y="0" width="4.6" height="13.6" fill="url(#gr)"/></g><g transform="translate(710,18.5)"><path d="M0.2 0.2 H20 V13.4 H2.4 Q8 11.6 8 7 Q8 3.2 0.2 2 Z" fill="url(#gr)" opacity="0.5"/></g></svg></div>
<!-- p_status -->
<div class="abs" style="left:6px;top:756px;width:299px;height:18px;box-sizing:border-box;border:1px solid #dbe1e3;background:#f8fafb"></div>
<div class="abs" style="left:7px;top:757px;width:16px;height:16px;background:#eff1f3;border-right:1px solid #dbe1e3"></div>
<div class="abs" style="left:267px;top:757px;width:17px;height:16px;border-left:1px solid #dbe1e3;border-right:1px solid #dbe1e3;background:#f8fafb"></div>
<div class="abs" style="left:295px;top:757px;width:1px;height:16px;background:#dbe1e3"></div>
<svg class="abs" style="left:0;top:756.5px" width="312" height="18" viewBox="0 0 312 18"><path d="M12 9 L16.8 5 V13 Z M281.4 9 L276.6 5 V13 Z" fill="#b3b6b8"/><path d="M287.4 9 L292.6 4.6 V13.4 Z M303.4 9 L298.2 4.6 V13.4 Z" fill="#8f9395"/></svg><div id="statusbar" class="abs"><div class="abs" style="left:3px;top:12px;width:26px;height:30px;box-sizing:border-box;background:#dfe1e3;border:1px solid #b6b9bb"></div><div class="abs" style="left:33px;top:12px;width:26px;height:30px;box-sizing:border-box;background:#dfe1e3;border:1px solid #b6b9bb"></div><svg class="abs" style="left:0;top:0" width="130" height="43" viewBox="0 0 130 43">
<defs><linearGradient id="sq" x1="0" x2="0" y1="0" y2="1"><stop offset="0" stop-color="#ffffff"/><stop offset="1" stop-color="#c9d9e2"/></linearGradient>
<linearGradient id="colb" x1="0" x2="1"><stop offset="0" stop-color="#ffffff"/><stop offset="1" stop-color="#b9cfdb"/></linearGradient>
<radialGradient id="glb" cx="0.4" cy="0.35" r="0.7"><stop offset="0" stop-color="#a9e0fa"/><stop offset="0.6" stop-color="#3fa3e0"/><stop offset="1" stop-color="#1c74b8"/></radialGradient>
<linearGradient id="wr" x1="0" x2="0" y1="0" y2="1"><stop offset="0" stop-color="#fdd34a"/><stop offset="1" stop-color="#f0b010"/></linearGradient></defs>
<rect x="6.6" y="17.6" width="18.8" height="18.8" fill="#f7f7f7" stroke="#a9acaf" stroke-width="1"/><rect x="7" y="18" width="18" height="3.4" fill="#ffffff" stroke="#b9bcbf" stroke-width="0.8"/>
<rect x="6.8" y="22.6" width="5.6" height="13.6" fill="url(#colb)" stroke="#1c7ca6" stroke-width="1.3"/>
<path d="M14.8 34.1 Q20.4 27.6 26.1 34.1 Q20.4 40.4 14.8 34.1 Z" fill="#303234"/><circle cx="20.4" cy="34" r="2.1" fill="#e9eaeb"/><circle cx="20.4" cy="34" r="1.1" fill="#303234"/>
<ellipse cx="46" cy="27.2" rx="11.6" ry="4.4" transform="rotate(-42 46 27.2)" fill="none" stroke="#3c3f42" stroke-width="1.2"/><circle cx="46.2" cy="27.3" r="8.8" fill="url(#glb)"/><path d="M40 24 Q43 20 47 21.6 Q45 25 42 26 Z M46 27 Q50 25 52.6 27.6 Q51 32 48 32.6 Q47.6 29.6 46 27Z M41 30 Q43 29.6 44 32 Q43 34 41.6 33Z" fill="#bfe9fb" opacity="0.75"/>
<g transform="translate(46 27.2) rotate(-42)"><path d="M-11.6 0 A11.6 4.4 0 0 1 11.6 0" fill="none" stroke="#3c3f42" stroke-width="1.2"/></g>
<rect x="66.7" y="17.7" width="18.6" height="18.6" rx="1.2" fill="url(#sq)" stroke="#1c7ca6" stroke-width="1.3"/>
<rect x="99" y="12" width="1" height="30" fill="#8f9395"/>
<path d="M112 11.4 L121.4 28.6 H102.6 Z" fill="url(#wr)" stroke="#e7a70c" stroke-width="1.6" stroke-linejoin="round"/><path d="M112 16.4 V23" stroke="#2b3050" stroke-width="2.1"/><circle cx="112" cy="25.8" r="1.15" fill="#2b3050"/>
</svg><span style="letter-spacing:0.034px;position:absolute;left:122.7px;top:10.5px;line-height:20px;font-size:13px;color:#41464a;white-space:nowrap;">You are leaving this component as packaged.</span><div class="abs" style="left:806px;top:5px;width:1px;height:38px;background:#b3b7b9"></div><div class="abs" style="left:811px;top:5px;width:1px;height:38px;background:#b3b7b9"></div><div class="abs" style="left:814px;top:7px;width:51px;height:30px;box-sizing:border-box;border:1px solid #cdd2d4"></div><div class="abs" style="left:847px;top:8px;width:1px;height:28px;background:#cdd2d4"></div><div class="abs" style="left:867px;top:5px;width:1px;height:38px;background:#b3b7b9"></div><div class="abs" style="left:870px;top:7px;width:49px;height:35px;box-sizing:border-box;border:1px solid #b0b4b6;background:#f6f7f7"></div><div class="abs" style="left:1038px;top:10px;width:80px;height:28px;box-sizing:border-box;border:1px solid #b3b7b9;background:#f6f7f7"></div><span style="letter-spacing:-0.123px;position:absolute;left:1047px;top:14.600000000000001px;line-height:20px;font-size:15px;color:#41464a;white-space:nowrap;">Geometry</span><svg class="abs" width="8.4" height="5.2" viewBox="0 0 8.4 5.2" style="left:852px;top:19px"><path d="M0 0 H8.4 L4.2 5.2 Z" fill="#66696c"/></svg><svg class="abs" style="left:814px;top:0" width="110" height="43" viewBox="0 0 110 43">
<defs><linearGradient id="bn" x1="0" x2="1"><stop offset="0" stop-color="#2a2a2a"/><stop offset="0.45" stop-color="#8a8a8a"/><stop offset="1" stop-color="#1f1f1f"/></linearGradient></defs>
<rect x="11.2" y="13.2" width="4.8" height="5" rx="0.8" fill="url(#bn)"/><rect x="18.4" y="13.2" width="4.8" height="5" rx="0.8" fill="url(#bn)"/>
<path d="M10.6 17.6 H16.6 Q17.6 24 17.4 31.6 H7.2 Q7.4 23 10.6 17.6 Z" fill="url(#bn)"/><path d="M17.6 17.6 H23.8 Q27 23 27.2 31.6 H17 Q16.8 24 17.6 17.6 Z" fill="url(#bn)"/><rect x="15.6" y="19" width="3.2" height="5.6" fill="#3d3d3d"/><path d="M7.2 29.6 H12.6 V31.7 H7.2 Z M21.6 29.6 H27.2 V31.7 H21.6 Z" fill="#161616"/><path d="M14.6 31.9 L17.2 26.6 L19.8 31.9 Z" fill="#f6f9fa"/>
<g transform="translate(69,13)"><path d="M1 5.6 L5.6 1 H22.4 V17.6 L17.6 23 H1 Z" fill="#f4f5f6" stroke="#55585b" stroke-width="1.4" stroke-linejoin="round"/><path d="M1 5.6 H17.6 V23 M17.6 5.6 L22.4 1" fill="none" stroke="#55585b" stroke-width="1.2"/>
<path d="M3.6 11 L6 9 H14.4 V18.6 L12 20.6 H3.6 Z" fill="#fbe3ae" stroke="#d8a548" stroke-width="0.9"/><path d="M7 8.6 L9 6.6 H16 V13.6 L14 15.6 H7 Z" fill="#79cbee" stroke="#2f93c2" stroke-width="0.9"/><path d="M7.5 9 H13.6 V15 H7.5Z" fill="#b4e4f8"/></g>
</svg></div>
<!-- p_nav -->
<div class="abs" style="left:1064px;top:0;width:42px;height:824px;background:linear-gradient(to right,rgba(0,0,10,0) 0%,rgba(0,0,10,0.025) 35%,rgba(0,0,10,0.07) 70%,rgba(0,0,10,0.125) 100%)"></div><div id="navpanel" class="abs"><div class="abs" style="left:0;top:0;width:1px;height:824px;background:#eceef0"></div><div class="abs" style="left:1px;top:0;width:1px;height:824px;background:#ced4d6"></div><span style="letter-spacing:-0.505px;position:absolute;left:31.90000000000009px;top:-17.3px;line-height:20px;font-size:15px;color:#4b5054;white-space:nowrap;">Desktop</span><span style="letter-spacing:-0.166px;position:absolute;left:31.90000000000009px;top:12.7px;line-height:20px;font-size:15px;color:#4b5054;white-space:nowrap;">My Documents</span><span style="letter-spacing:0.017px;position:absolute;left:31.90000000000009px;top:42.7px;line-height:20px;font-size:15px;color:#4b5054;white-space:nowrap;">desktop-4un1to5</span><span style="letter-spacing:0.024px;position:absolute;left:31.90000000000009px;top:72.7px;line-height:20px;font-size:15px;color:#4b5054;white-space:nowrap;">Working Directory</span><span style="letter-spacing:-0.116px;position:absolute;left:31.90000000000009px;top:102.7px;line-height:20px;font-size:15px;color:#4b5054;white-space:nowrap;">Manikin Library</span><span style="letter-spacing:-0.561px;position:absolute;left:31.90000000000009px;top:132.7px;line-height:20px;font-size:15px;color:#4b5054;white-space:nowrap;">Favorites</span><span style="letter-spacing:0.097px;position:absolute;left:31.90000000000009px;top:192.7px;line-height:20px;font-size:15px;color:#4b5054;white-space:nowrap;">Network</span><svg class="abs" style="left:0;top:0" width="178" height="230" viewBox="0 0 178 230"><defs><linearGradient id="scr" x1="0" x2="0" y1="0" y2="1"><stop offset="0" stop-color="#35d3e6"/><stop offset="1" stop-color="#1277b4"/></linearGradient>
<linearGradient id="fld" x1="0" x2="1" y1="0" y2="1"><stop offset="0" stop-color="#fffdf6"/><stop offset="1" stop-color="#fbe4b0"/></linearGradient>
<radialGradient id="gl2" cx="0.4" cy="0.35" r="0.7"><stop offset="0" stop-color="#e6f6fd"/><stop offset="0.6" stop-color="#62b6e6"/><stop offset="1" stop-color="#2277b8"/></radialGradient></defs><g transform="translate(7,12.6)"><path d="M1 8 Q1 6.8 2 6.8 H6.6 V18.6 H1 Z" fill="#e4bd72" stroke="#c79b4c" stroke-width="0.8"/><rect x="6.6" y="1" width="9" height="11.6" fill="#fbfbfb" stroke="#a9acaf" stroke-width="0.9"/><path d="M8.6 3.4 H13.6 M8.6 5.8 H13.6 M8.6 8.2 H13.6" stroke="#9a9da0" stroke-width="0.9"/><path d="M1 18.8 L4.6 10.6 H20 L16 18.8 Z" fill="url(#fld)" stroke="#d5ab5c" stroke-width="0.9" stroke-linejoin="round"/></g><g transform="translate(8,44.2)"><rect x="0" y="0" width="18" height="12.6" fill="url(#scr)"/><rect x="8" y="12.6" width="2" height="2" fill="#5f6e78"/><rect x="5.2" y="14.4" width="7.6" height="1.2" fill="#5f6e78"/></g><g transform="translate(7,72.6)"><path d="M1 4.6 Q1 2.8 2.6 2.6 H7 Q8 2.6 8.6 3.6 L9.4 4.8 H17.6 Q19 4.8 19 6.2 V17.6 Q19 18.8 17.8 18.8 H2.2 Q1 18.8 1 17.6 Z" fill="#ecd3a0" stroke="#d2aa62" stroke-width="0.9"/><path d="M1.5 6.8 H18.5 V17.5 Q18.5 18.3 17.7 18.3 H2.3 Q1.5 18.3 1.5 17.5 Z" fill="url(#fld)" stroke="#dcb873" stroke-width="0.6"/><path d="M15.4 -0.9 L17.2 2.2 L20.2 4 L17.2 5.8 L15.4 8.9 L13.6 5.8 L10.6 4 L13.6 2.2 Z" fill="#1f8ed0" stroke="#f6f9fa" stroke-width="0.8"/><circle cx="15.4" cy="4" r="1" fill="#dff1fa"/></g><g transform="translate(7,102.6)"><path d="M1 4.6 Q1 2.8 2.6 2.6 H7 Q8 2.6 8.6 3.6 L9.4 4.8 H17.6 Q19 4.8 19 6.2 V17.6 Q19 18.8 17.8 18.8 H2.2 Q1 18.8 1 17.6 Z" fill="#ecd3a0" stroke="#d2aa62" stroke-width="0.9"/><path d="M1.5 6.8 H18.5 V17.5 Q18.5 18.3 17.7 18.3 H2.3 Q1.5 18.3 1.5 17.5 Z" fill="url(#fld)" stroke="#dcb873" stroke-width="0.6"/><rect x="5.6" y="8.6" width="8.4" height="6.8" fill="#1f76b4"/><path d="M7 10.8 H12.6 M7 13.2 H12.6" stroke="#e8f4fb" stroke-width="1.1"/></g><g transform="translate(7,132.6)"><path d="M1 4.6 Q1 2.8 2.6 2.6 H7 Q8 2.6 8.6 3.6 L9.4 4.8 H17.6 Q19 4.8 19 6.2 V17.6 Q19 18.8 17.8 18.8 H2.2 Q1 18.8 1 17.6 Z" fill="#ecd3a0" stroke="#d2aa62" stroke-width="0.9"/><path d="M1.5 6.8 H18.5 V17.5 Q18.5 18.3 17.7 18.3 H2.3 Q1.5 18.3 1.5 17.5 Z" fill="url(#fld)" stroke="#dcb873" stroke-width="0.6"/><rect x="5.2" y="8.2" width="9.2" height="8.2" fill="#fffdf6"/><path d="M9.8 9 V15.6 M6.5 12.3 H13.1 M7.5 10 L12.1 14.6 M12.1 10 L7.5 14.6" stroke="#1f6fa8" stroke-width="1.1"/></g><g transform="translate(7,192)"><rect x="4.6" y="6.6" width="14.6" height="10.6" fill="url(#scr)"/><rect x="10.8" y="17.2" width="2" height="2" fill="#5f6e78"/><rect x="8" y="19" width="7.6" height="1.1" fill="#7e8b94"/><circle cx="5.4" cy="5.4" r="5" fill="url(#gl2)"/><path d="M3 3 Q5 1.6 6.6 3 Q5.6 5 3.6 5Z M5 6.6 Q7.6 6 8.6 8 Q7 9.6 5.6 9Z" fill="#f2fbff" opacity="0.85"/></g></svg><div class="abs" style="left:0;top:793px;width:176px;height:1px;background:#e3e8ea"></div><svg class="abs" style="left:11px;top:807.8px" width="10" height="11" viewBox="0 0 10 11"><path d="M0.4 0.2 V10.6 L9 5.4 Z" fill="#8a8e90"/></svg><span style="letter-spacing:-0.366px;position:absolute;left:28.700000000000045px;top:804.4px;line-height:20px;font-size:15px;color:#3f4245;white-space:nowrap;font-weight:bold;">Folder Tree</span></div><div id="splitter" class="abs"></div>
<!-- p_browser -->
<div id="browser" class="abs"><div class="box" style="top:8px;height:353px"></div><div class="box" style="top:424px;height:322px"></div><span class="h" style="letter-spacing:-0.010px;top:6.8px">Prompting for selection</span><span class="p" style="letter-spacing:-0.005px;top:102.0px">This example function (“selectItems”) demonstrates interactive</span><span class="p" style="letter-spacing:-0.010px;top:125.0px">selection.&nbsp;&nbsp; Choose one or more strings to use for selection item</span><span class="p" style="letter-spacing:-0.013px;top:148.0px">types, and enter the maximum number of selections.</span><span class="h" style="letter-spacing:-0.050px;top:423.4px">Programmatic selection</span><span class="p" style="letter-spacing:-0.017px;top:517.9px">This example function (“createAndHighlightSelections”)</span><span class="p" style="letter-spacing:-0.008px;top:540.9px">demonstrates programmatic selection.&nbsp;&nbsp; Enter the name of feature(s)</span><span class="p" style="letter-spacing:0.021px;top:563.9px">found in the current assembly.&nbsp; This function traverses the assembly</span><span class="p" style="letter-spacing:-0.025px;top:586.9px">and highlights each feature with the given name.</span><div class="inp" style="left:109px;top:234px;width:115px;height:79px;border-width:2px 2px 2px 2px;border-color:#6d6d6d #e3e3e3 #e3e3e3 #6d6d6d"></div><div class="abs" style="left:201px;top:237px;width:21px;height:74px;background:#f0f0f0"></div><svg class="abs" style="left:201px;top:237px" width="21" height="74" viewBox="0 0 21 74"><path d="M4 26.4 L10.6 19.6 L17.4 26.4 M4 47.4 L10.6 54.2 L17.4 47.4" fill="none" stroke="#606060" stroke-width="2.8"/></svg><span class="ft" style="letter-spacing:-0.077px;left:114.8px;top:237.4px">feature</span><span class="ft" style="letter-spacing:-0.161px;left:114.8px;top:256.1px">prt_or_asm</span><span class="ft" style="letter-spacing:-0.354px;left:114.8px;top:274.8px">edge</span><span class="ft" style="letter-spacing:-0.104px;left:114.8px;top:293.5px">surface</span><div class="inp" style="left:226px;top:290px;width:180px;height:26px"></div><span class="ft" style="letter-spacing:-0.196px;left:229.0px;top:292.6px">UNLIMITED</span><div class="btn" style="left:411.5px;top:288px;width:74.5px;height:29.5px"></div><span class="ft" style="letter-spacing:-0.019px;left:424.8px;top:292.6px">Select</span><div class="inp" style="left:158px;top:675px;width:180px;height:26px"></div><span class="ft" style="letter-spacing:-0.028px;left:161.8px;top:678.0px">CHECK</span><div class="btn" style="left:343.70000000000005px;top:674px;width:93px;height:29px"></div><span class="ft" style="letter-spacing:-0.039px;left:358.0px;top:678.0px">Highlight</span><div class="abs" style="left:594px;top:0;width:21px;height:799px;background:#f0f0f0"></div><div class="abs" style="left:595px;top:36px;width:19px;height:729px;background:#cdcdcd"></div><svg class="abs" style="left:594px;top:765px" width="21" height="30" viewBox="0 0 21 30"><path d="M3 7.4 L10.6 15.6 L18.4 7.4" fill="none" stroke="#606060" stroke-width="3.4"/></svg></div><div id="bstatus" class="abs"><span style="letter-spacing:-1.344px;position:absolute;left:2px;top:5.6px;line-height:20px;font-size:15px;color:#41464a;white-space:nowrap;">Fet</span></div>
</body>
</html>
